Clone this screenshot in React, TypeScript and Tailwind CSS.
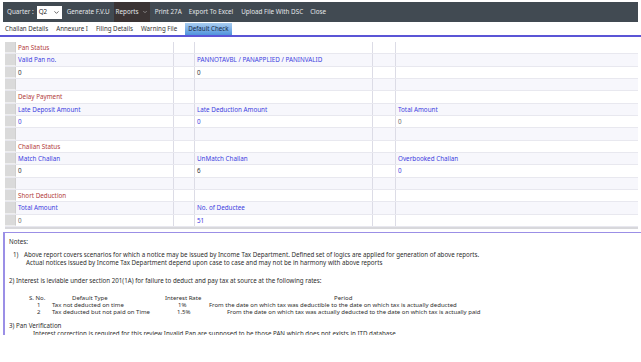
import { ChevronDown } from 'lucide-react';

type Cell = { text: string; tone?: 'red' | 'blue' | 'dark' | 'gray' };
type Row = { a?: Cell; c?: Cell; e?: Cell; title?: string };

const rows: Row[] = [
  { title: 'Pan Status' },
  { a: { text: 'Valid Pan no.', tone: 'blue' }, c: { text: 'PANNOTAVBL / PANAPPLIED / PANINVALID', tone: 'blue' } },
  { a: { text: '0', tone: 'dark' }, c: { text: '0', tone: 'dark' } },
  {},
  { title: 'Delay Payment' },
  { a: { text: 'Late Deposit Amount', tone: 'blue' }, c: { text: 'Late Deduction Amount', tone: 'blue' }, e: { text: 'Total Amount', tone: 'blue' } },
  { a: { text: '0', tone: 'blue' }, c: { text: '0', tone: 'blue' }, e: { text: '0', tone: 'gray' } },
  {},
  { title: 'Challan Status' },
  { a: { text: 'Match Challan', tone: 'blue' }, c: { text: 'UnMatch Challan', tone: 'blue' }, e: { text: 'Overbooked Challan', tone: 'blue' } },
  { a: { text: '0', tone: 'dark' }, c: { text: '6', tone: 'dark' }, e: { text: '0', tone: 'blue' } },
  {},
  { title: 'Short Deduction' },
  { a: { text: 'Total Amount', tone: 'blue' }, c: { text: 'No. of Deductee', tone: 'blue' } },
  { a: { text: '0', tone: 'gray' }, c: { text: '51', tone: 'blue' } },
];

const toneClass = {
  red: 'text-[#b23a3a]',
  blue: 'text-[#3d3de0]',
  dark: 'text-[#333333]',
  gray: 'text-[#6b6b6b]',
};

function GridCell({ cell, last }: { cell?: Cell; last?: boolean }) {
  return (
    <div className={`flex items-center pl-[2px] truncate ${last ? '' : 'border-r border-[#dcdce6]'}`}>
      {cell && <span className={toneClass[cell.tone ?? 'dark']}>{cell.text}</span>}
    </div>
  );
}

export default function App() {
  const tabs = ['Challan Details', 'Annexure I', 'Filing Details', 'Warning File'];

  return (
    <div
      className="w-[641px] h-[362px] bg-white overflow-hidden pt-[2px]"
      style={{ fontFamily: '"Noto Sans", "Open Sans", sans-serif' }}
    >
      {/* Toolbar */}
      <div className="mx-[3px] h-[20px] bg-[#414a52] flex items-center pl-[4px] text-[6.3px] text-[#e3e6e9]">
        <span>Quarter :</span>
        <div className="ml-[3px] h-[13px] w-[25px] bg-white flex items-center justify-between px-[2px] text-[#222]">
          <span>Q2</span>
          <ChevronDown size={7} strokeWidth={3} className="text-[#555]" />
        </div>
        <span className="ml-[5px]">Generate F.V.U</span>
        <div className="ml-[4px] h-full bg-[#3b3434] flex items-center gap-[3px] px-[2px]">
          <span>Reports</span>
          <ChevronDown size={6} strokeWidth={3} className="text-[#999]" />
        </div>
        <span className="ml-[5px]">Print 27A</span>
        <span className="ml-[7px]">Export To Excel</span>
        <span className="ml-[8px]">Upload File With DSC</span>
        <span className="ml-[7px]">Close</span>
      </div>

      {/* Tabs */}
      <div className="h-[14px] mt-[1px] flex items-stretch pl-[5px] text-[6.2px] text-[#333] border-b-2 border-[#5b55d6]">
        {tabs.map((t) => (
          <span key={t} className="flex items-center mr-[8px]">{t}</span>
        ))}
        <span className="flex items-center px-[3px] bg-gradient-to-b from-[#a9cdf0] to-[#4f93dc] text-[#1a2a44]">
          Default Check
        </span>
      </div>

      {/* Grid */}
      <div className="mt-[5px] ml-[5px] mr-[3px] border-b-2 border-[#d8d8dc] text-[6.3px]">
        {rows.map((r, i) => (
          <div
            key={i}
            className={`grid grid-cols-[11px_158px_21px_178px_23px_1fr] h-[12.33px] border-b border-[#e8e8ef] ${
              i % 2 === 1 ? 'bg-[#f7f7fc]' : 'bg-white'
            }`}
          >
            <div className="bg-[#dadada] border-r border-[#cfcfcf] border-b border-b-[#eeeeee]" />
            <GridCell cell={r.title ? { text: r.title, tone: 'red' } : r.a} />
            <GridCell />
            <GridCell cell={r.c} />
            <GridCell />
            <GridCell cell={r.e} last />
          </div>
        ))}
      </div>

      {/* Notes */}
      <div className="mt-[3px] ml-[3px] h-[103px] border-l-2 border-t border-[#9b8fe6] overflow-hidden pl-[4px] pt-[5px] text-[6.2px] text-[#2e2e2e] leading-[8px]">
        <div>Notes:</div>
        <div className="mt-[5px] flex pl-[4px]">
          <span className="w-[11px]">1)</span>
          <div>
            <div>Above report covers scenarios for which a notice may be issued by Income Tax Department. Defined set of logics are applied for generation of above reports.</div>
            <div className="pl-[2px]">Actual notices issued by Income Tax Department depend upon case to case and may not be in harmony with above reports</div>
          </div>
        </div>
        <div className="mt-[10px]">2) Interest is leviable under section 201(1A) for failure to deduct and pay tax at source at the following rates:</div>
        <div className="mt-[10px] leading-[7px] text-[6px]">
          <div className="flex">
            <span className="w-[63px] pl-[20px]">S. No.</span>
            <span className="w-[93px]">Default Type</span>
            <span className="w-[169px]">Interest Rate</span>
            <span>Period</span>
          </div>
          <div className="flex">
            <span className="w-[43px] pl-[28px]">1</span>
            <span className="w-[126px]">Tax not deducted on time</span>
            <span className="w-[31px]">1%</span>
            <span>From the date on which tax was deductible to the date on which tax is actually deducted</span>
          </div>
          <div className="flex">
            <span className="w-[43px] pl-[28px]">2</span>
            <span className="w-[125px]">Tax deducted but not paid on Time</span>
            <span className="w-[50px]">1.5%</span>
            <span>From the date on which tax was actually deducted to the date on which tax is actually paid</span>
          </div>
        </div>
        <div className="mt-[6px]">3) Pan Verification</div>
        <div className="pl-[24px] whitespace-nowrap">
          Interest correction is required for this review Invalid Pan are supposed to be those PAN which does not exists in ITD database
        </div>
      </div>
    </div>
  );
}
